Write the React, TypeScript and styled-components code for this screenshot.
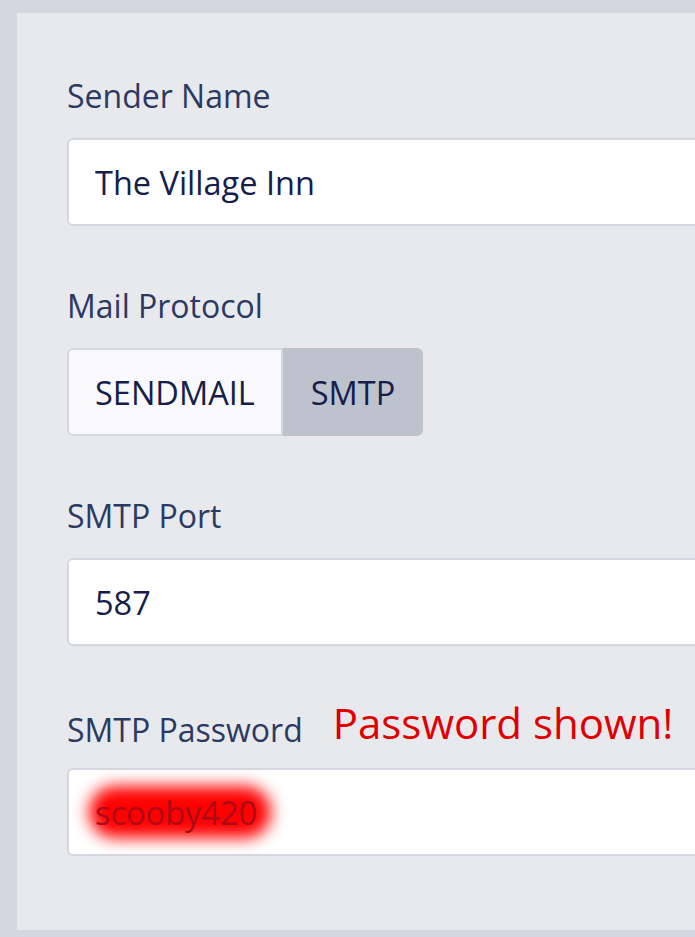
import { createGlobalStyle } from 'styled-components';
import styled from 'styled-components';

const GlobalStyle = createGlobalStyle`
  html, body {
    margin: 0;
    padding: 0;
    background: #d4d7df;
    overflow: hidden;
  }
  body {
    font-family: 'Open Sans', 'Noto Sans', sans-serif;
  }
`;

const Page = styled.div`
  padding: 13px 0 7px 17px;
  width: 1000px;
`;

const Panel = styled.div`
  background: #e8e9ed;
  padding: 64px 0 74px 50px;
  display: flex;
  flex-direction: column;
  gap: 61px;
`;

const Field = styled.div`
  display: flex;
  flex-direction: column;
  gap: 21px;
`;

const LabelRow = styled.div`
  display: flex;
  align-items: baseline;
  gap: 30px;
  height: 40px;
`;

const Label = styled.label`
  font-size: 32px;
  line-height: 38px;
  color: #2b3a63;
`;

const Warning = styled.span`
  font-size: 42px;
  line-height: 38px;
  color: #e00000;
  transform: translateY(-3px);
`;

const Input = styled.div`
  position: relative;
  box-sizing: border-box;
  height: 88px;
  border: 2px solid #d4d7df;
  border-radius: 6px;
  background: #ffffff;
  padding: 0 26px;
  display: flex;
  align-items: center;
  font-size: 32.5px;
  color: #14204a;
`;

const Secret = styled.span`
  position: relative;
  color: #ad0a17;
  z-index: 1;
`;

const Smudge = styled.span`
  position: absolute;
  left: 20px;
  top: 16px;
  width: 182px;
  height: 52px;
  border-radius: 26px;
  background: #ff0000;
  filter: blur(8px);
`;

const Toggle = styled.div`
  display: flex;
  height: 88px;
`;

const ToggleButton = styled.button<{ $active?: boolean }>`
  box-sizing: border-box;
  font-family: inherit;
  font-size: 32.5px;
  color: #14204a;
  padding: 0 26px;
  border: 2px solid ${(p) => (p.$active ? '#bec2cd' : '#d4d7df')};
  background: ${(p) => (p.$active ? '#bec2cd' : '#f9f9fb')};
  border-radius: ${(p) => (p.$active ? '0 6px 6px 0' : '6px 0 0 6px')};
  cursor: pointer;
`;

function App() {
  return (
    <>
      <GlobalStyle />
      <Page>
        <Panel>
          <Field>
            <LabelRow>
              <Label>Sender Name</Label>
            </LabelRow>
            <Input>The Village Inn</Input>
          </Field>
          <Field>
            <LabelRow>
              <Label>Mail Protocol</Label>
            </LabelRow>
            <Toggle>
              <ToggleButton>SENDMAIL</ToggleButton>
              <ToggleButton $active>SMTP</ToggleButton>
            </Toggle>
          </Field>
          <Field>
            <LabelRow>
              <Label>SMTP Port</Label>
            </LabelRow>
            <Input>587</Input>
          </Field>
          <Field>
            <LabelRow>
              <Label>SMTP Password</Label>
              <Warning>Password shown!</Warning>
            </LabelRow>
            <Input>
              <Smudge />
              <Secret>scooby420</Secret>
            </Input>
          </Field>
        </Panel>
      </Page>
    </>
  );
}

export default App;
